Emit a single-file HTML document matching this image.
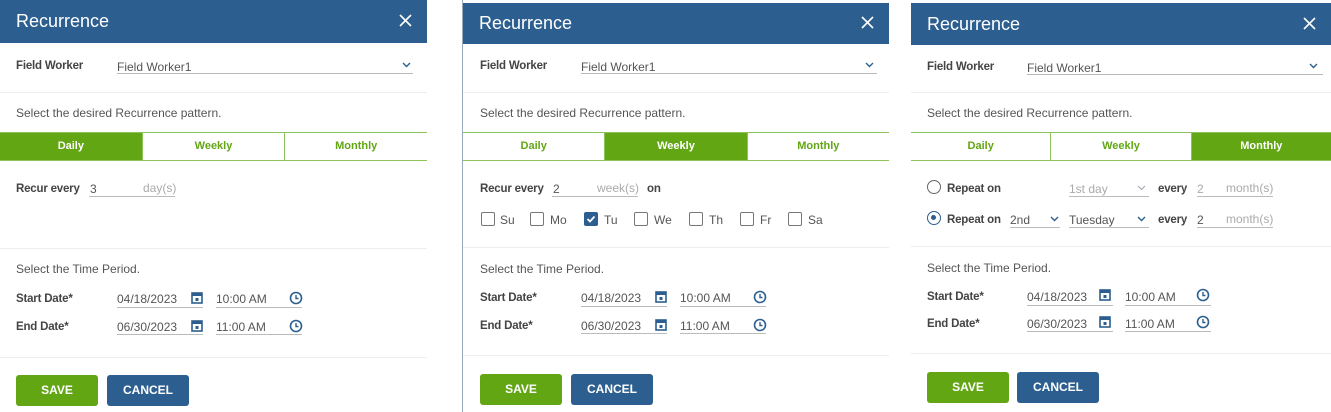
<!DOCTYPE html>
<html><head><meta charset="utf-8"><style>
*{margin:0;padding:0;box-sizing:border-box}
body{width:1331px;height:412px;background:#fff;position:relative;overflow:hidden;font-family:"Liberation Sans",sans-serif;color:#444}
.p{position:absolute;top:0;height:412px;background:#fff}
.a{position:absolute;white-space:nowrap}
.hd{position:absolute;left:0;right:0;background:#2c5f8f;color:#fff}
.hd .t{position:absolute;left:16px;top:11px;font-size:18px}
.hd svg{position:absolute;right:15px;top:14px}
.lb{font-size:11.5px;font-weight:bold;color:#444;letter-spacing:-0.2px;margin-top:2px}
.tx{font-size:12px;color:#555}
.ul{position:absolute;border-bottom:1px solid #bbb;height:1px}
.sep{position:absolute;left:0;right:0;height:1px;background:#eee}
.tabs{position:absolute;left:0;right:0;height:29px;display:flex;border-top:1px solid #8cc35a;border-bottom:1px solid #8cc35a}
.tabs div{flex:1;text-align:center;font-size:11px;font-weight:bold;color:#62a614;line-height:27px;border-left:1px solid #8cc35a}
.tabs div:first-child{border-left:none}
.tabs .on{background:#62a614;color:#fff}
.btn{position:absolute;height:31px;border-radius:3px;color:#fff;font-size:12px;font-weight:bold;text-align:center;line-height:31px}
.sv{background:#62a614;width:82px}
.cn{background:#2c5f8f;width:82px}
.cb{position:absolute;width:14px;height:14px;border:1px solid #777;border-radius:2px}
.ic{position:absolute}
</style></head><body>

<!-- Panel 1 -->
<div class="p" style="left:0;width:427px">
<div class="hd" style="top:0;height:43px"><span class="t">Recurrence</span><svg width="13" height="13" viewBox="0 0 13 13"><path d="M1 1L12 12M12 1L1 12" stroke="#fff" stroke-width="1.6"/></svg></div>
<span class="a lb" style="left:16px;top:58px">Field Worker</span>
<span class="a tx" style="left:117px;top:60px">Field Worker1</span>
<svg class="ic" style="left:402px;top:62px" width="9" height="6" viewBox="0 0 9 6"><path d="M1 1l3.5 3.5L8 1" fill="none" stroke="#2c5f8f" stroke-width="1.4"/></svg>
<div class="ul" style="left:117px;width:296px;top:73px"></div>
<div class="sep" style="top:92px"></div>
<span class="a tx" style="left:16px;top:106px">Select the desired Recurrence pattern.</span>
<div class="tabs" style="top:132px"><div class="on">Daily</div><div>Weekly</div><div>Monthly</div></div>
<span class="a lb" style="left:16px;top:181px">Recur every</span>
<span class="a tx" style="left:90px;top:182px">3</span>
<span class="a tx" style="left:143px;top:181px;color:#aaa">day(s)</span>
<div class="ul" style="left:89px;width:86px;top:196px"></div>
<div class="sep" style="top:248px"></div>
<span class="a tx" style="left:16px;top:262px">Select the Time Period.</span>
<span class="a lb" style="left:16px;top:291px">Start Date*</span>
<span class="a tx" style="left:117px;top:292px">04/18/2023</span>
<span class="a tx" style="left:216px;top:292px">10:00 AM</span>
<div class="ul" style="left:117px;width:86px;top:307px"></div>
<div class="ul" style="left:216px;width:86px;top:307px"></div>
<span class="a lb" style="left:16px;top:319px">End Date*</span>
<span class="a tx" style="left:117px;top:320px">06/30/2023</span>
<span class="a tx" style="left:216px;top:320px">11:00 AM</span>
<div class="ul" style="left:117px;width:86px;top:334px"></div>
<div class="ul" style="left:216px;width:86px;top:334px"></div>
<svg class="ic" style="left:191px;top:291px" width="12" height="13" viewBox="0 0 12 13"><rect x="1" y="2" width="10" height="10" fill="none" stroke="#2c5f8f" stroke-width="1.6"/><rect x="1" y="2" width="10" height="3" fill="#2c5f8f"/><rect x="4.5" y="7" width="3" height="3" fill="#2c5f8f"/></svg>
<svg class="ic" style="left:191px;top:319px" width="12" height="13" viewBox="0 0 12 13"><rect x="1" y="2" width="10" height="10" fill="none" stroke="#2c5f8f" stroke-width="1.6"/><rect x="1" y="2" width="10" height="3" fill="#2c5f8f"/><rect x="4.5" y="7" width="3" height="3" fill="#2c5f8f"/></svg>
<svg class="ic" style="left:289px;top:291px" width="14" height="14" viewBox="0 0 14 14"><circle cx="7" cy="7" r="5.5" fill="none" stroke="#2c5f8f" stroke-width="1.6"/><path d="M7 4v3.5h2.5" fill="none" stroke="#2c5f8f" stroke-width="1.4"/></svg>
<svg class="ic" style="left:289px;top:319px" width="14" height="14" viewBox="0 0 14 14"><circle cx="7" cy="7" r="5.5" fill="none" stroke="#2c5f8f" stroke-width="1.6"/><path d="M7 4v3.5h2.5" fill="none" stroke="#2c5f8f" stroke-width="1.4"/></svg>
<div class="sep" style="top:357px"></div>
<div class="btn sv" style="left:16px;top:375px">SAVE</div>
<div class="btn cn" style="left:107px;top:375px">CANCEL</div>
</div>

<!-- Panel 2 -->
<div class="p" style="left:462px;width:427px;border-left:1px solid #9aaabb">
<div class="hd" style="top:3px;height:41px"><span class="t" style="top:10px">Recurrence</span><svg width="13" height="13" viewBox="0 0 13 13" style="top:13px"><path d="M1 1L12 12M12 1L1 12" stroke="#fff" stroke-width="1.6"/></svg></div>
<span class="a lb" style="left:17px;top:58px">Field Worker</span>
<span class="a tx" style="left:118px;top:60px">Field Worker1</span>
<svg class="ic" style="left:402px;top:62px" width="9" height="6" viewBox="0 0 9 6"><path d="M1 1l3.5 3.5L8 1" fill="none" stroke="#2c5f8f" stroke-width="1.4"/></svg>
<div class="ul" style="left:118px;width:296px;top:73px"></div>
<div class="sep" style="top:92px"></div>
<span class="a tx" style="left:17px;top:106px">Select the desired Recurrence pattern.</span>
<div class="tabs" style="top:132px"><div>Daily</div><div class="on">Weekly</div><div>Monthly</div></div>
<span class="a lb" style="left:17px;top:181px">Recur every</span>
<span class="a tx" style="left:90px;top:182px">2</span>
<span class="a tx" style="left:134px;top:181px;color:#aaa">week(s)</span>
<span class="a lb" style="left:184px;top:181px">on</span>
<div class="ul" style="left:89px;width:86px;top:196px"></div>
<div class="cb" style="left:18px;top:212px"></div><span class="a tx" style="left:37px;top:213px">Su</span>
<div class="cb" style="left:67px;top:212px"></div><span class="a tx" style="left:87px;top:213px">Mo</span>
<div class="cb" style="left:121px;top:212px;background:#2c5f8f;border-color:#2c5f8f"><svg width="12" height="12" viewBox="0 0 12 12" style="position:absolute;left:0;top:0"><path d="M2.5 6l2.5 2.5 4.5-5" fill="none" stroke="#fff" stroke-width="1.8"/></svg></div><span class="a tx" style="left:141px;top:213px">Tu</span>
<div class="cb" style="left:171px;top:212px"></div><span class="a tx" style="left:191px;top:213px">We</span>
<div class="cb" style="left:226px;top:212px"></div><span class="a tx" style="left:246px;top:213px">Th</span>
<div class="cb" style="left:277px;top:212px"></div><span class="a tx" style="left:297px;top:213px">Fr</span>
<div class="cb" style="left:325px;top:212px"></div><span class="a tx" style="left:345px;top:213px">Sa</span>
<div class="sep" style="top:247px"></div>
<span class="a tx" style="left:17px;top:262px">Select the Time Period.</span>
<span class="a lb" style="left:17px;top:290px">Start Date*</span>
<span class="a tx" style="left:118px;top:291px">04/18/2023</span>
<span class="a tx" style="left:217px;top:291px">10:00 AM</span>
<div class="ul" style="left:118px;width:86px;top:306px"></div>
<div class="ul" style="left:217px;width:86px;top:306px"></div>
<span class="a lb" style="left:17px;top:318px">End Date*</span>
<span class="a tx" style="left:118px;top:319px">06/30/2023</span>
<span class="a tx" style="left:217px;top:319px">11:00 AM</span>
<div class="ul" style="left:118px;width:86px;top:333px"></div>
<div class="ul" style="left:217px;width:86px;top:333px"></div>
<svg class="ic" style="left:192px;top:290px" width="12" height="13" viewBox="0 0 12 13"><rect x="1" y="2" width="10" height="10" fill="none" stroke="#2c5f8f" stroke-width="1.6"/><rect x="1" y="2" width="10" height="3" fill="#2c5f8f"/><rect x="4.5" y="7" width="3" height="3" fill="#2c5f8f"/></svg>
<svg class="ic" style="left:192px;top:318px" width="12" height="13" viewBox="0 0 12 13"><rect x="1" y="2" width="10" height="10" fill="none" stroke="#2c5f8f" stroke-width="1.6"/><rect x="1" y="2" width="10" height="3" fill="#2c5f8f"/><rect x="4.5" y="7" width="3" height="3" fill="#2c5f8f"/></svg>
<svg class="ic" style="left:290px;top:290px" width="14" height="14" viewBox="0 0 14 14"><circle cx="7" cy="7" r="5.5" fill="none" stroke="#2c5f8f" stroke-width="1.6"/><path d="M7 4v3.5h2.5" fill="none" stroke="#2c5f8f" stroke-width="1.4"/></svg>
<svg class="ic" style="left:290px;top:318px" width="14" height="14" viewBox="0 0 14 14"><circle cx="7" cy="7" r="5.5" fill="none" stroke="#2c5f8f" stroke-width="1.6"/><path d="M7 4v3.5h2.5" fill="none" stroke="#2c5f8f" stroke-width="1.4"/></svg>
<div class="sep" style="top:355px"></div>
<div class="btn sv" style="left:17px;top:374px">SAVE</div>
<div class="btn cn" style="left:108px;top:374px">CANCEL</div>
</div>

<!-- Panel 3 -->
<div class="p" style="left:911px;width:420px">
<div class="hd" style="top:3px;height:42px"><span class="t" style="top:11px">Recurrence</span><svg width="13" height="13" viewBox="0 0 13 13" style="top:14px"><path d="M1 1L12 12M12 1L1 12" stroke="#fff" stroke-width="1.6"/></svg></div>
<span class="a lb" style="left:16px;top:59px">Field Worker</span>
<span class="a tx" style="left:116px;top:61px">Field Worker1</span>
<svg class="ic" style="left:398px;top:63px" width="9" height="6" viewBox="0 0 9 6"><path d="M1 1l3.5 3.5L8 1" fill="none" stroke="#2c5f8f" stroke-width="1.4"/></svg>
<div class="ul" style="left:116px;width:296px;top:74px"></div>
<div class="sep" style="top:92px"></div>
<span class="a tx" style="left:16px;top:106px">Select the desired Recurrence pattern.</span>
<div class="tabs" style="top:132px"><div>Daily</div><div>Weekly</div><div class="on">Monthly</div></div>
<div class="a" style="left:16px;top:180px;width:14px;height:14px;border:1.5px solid #666;border-radius:50%"></div>
<span class="a lb" style="left:36px;top:181px">Repeat on</span>
<span class="a tx" style="left:158px;top:182px;color:#aaa">1st day</span>
<svg class="ic" style="left:226px;top:185px" width="9" height="6" viewBox="0 0 9 6"><path d="M1 1l3.5 3.5L8 1" fill="none" stroke="#aab" stroke-width="1.2"/></svg>
<div class="ul" style="left:158px;width:80px;top:196px"></div>
<span class="a lb" style="left:247px;top:181px">every</span>
<span class="a tx" style="left:286px;top:182px;color:#aaa">2</span>
<span class="a tx" style="left:315px;top:181px;color:#aaa">month(s)</span>
<div class="ul" style="left:286px;width:76px;top:196px"></div>
<div class="a" style="left:16px;top:211px;width:14px;height:14px;border:1.5px solid #2c5f8f;border-radius:50%"><div style="position:absolute;left:3px;top:3px;width:5px;height:5px;background:#2c5f8f;border-radius:50%"></div></div>
<span class="a lb" style="left:36px;top:212px">Repeat on</span>
<span class="a tx" style="left:99px;top:213px">2nd</span>
<svg class="ic" style="left:139px;top:216px" width="9" height="6" viewBox="0 0 9 6"><path d="M1 1l3.5 3.5L8 1" fill="none" stroke="#2c5f8f" stroke-width="1.4"/></svg>
<div class="ul" style="left:99px;width:50px;top:227px"></div>
<span class="a tx" style="left:158px;top:213px">Tuesday</span>
<svg class="ic" style="left:226px;top:216px" width="9" height="6" viewBox="0 0 9 6"><path d="M1 1l3.5 3.5L8 1" fill="none" stroke="#2c5f8f" stroke-width="1.4"/></svg>
<div class="ul" style="left:158px;width:80px;top:227px"></div>
<span class="a lb" style="left:247px;top:212px">every</span>
<span class="a tx" style="left:286px;top:213px">2</span>
<span class="a tx" style="left:315px;top:212px;color:#aaa">month(s)</span>
<div class="ul" style="left:286px;width:76px;top:227px"></div>
<div class="sep" style="top:246px"></div>
<span class="a tx" style="left:16px;top:261px">Select the Time Period.</span>
<span class="a lb" style="left:16px;top:289px">Start Date*</span>
<span class="a tx" style="left:116px;top:290px">04/18/2023</span>
<span class="a tx" style="left:214px;top:290px">10:00 AM</span>
<div class="ul" style="left:116px;width:86px;top:305px"></div>
<div class="ul" style="left:214px;width:86px;top:305px"></div>
<span class="a lb" style="left:16px;top:316px">End Date*</span>
<span class="a tx" style="left:116px;top:317px">06/30/2023</span>
<span class="a tx" style="left:214px;top:317px">11:00 AM</span>
<div class="ul" style="left:116px;width:86px;top:331px"></div>
<div class="ul" style="left:214px;width:86px;top:331px"></div>
<svg class="ic" style="left:188px;top:288px" width="12" height="13" viewBox="0 0 12 13"><rect x="1" y="2" width="10" height="10" fill="none" stroke="#2c5f8f" stroke-width="1.6"/><rect x="1" y="2" width="10" height="3" fill="#2c5f8f"/><rect x="4.5" y="7" width="3" height="3" fill="#2c5f8f"/></svg>
<svg class="ic" style="left:188px;top:315px" width="12" height="13" viewBox="0 0 12 13"><rect x="1" y="2" width="10" height="10" fill="none" stroke="#2c5f8f" stroke-width="1.6"/><rect x="1" y="2" width="10" height="3" fill="#2c5f8f"/><rect x="4.5" y="7" width="3" height="3" fill="#2c5f8f"/></svg>
<svg class="ic" style="left:285px;top:288px" width="14" height="14" viewBox="0 0 14 14"><circle cx="7" cy="7" r="5.5" fill="none" stroke="#2c5f8f" stroke-width="1.6"/><path d="M7 4v3.5h2.5" fill="none" stroke="#2c5f8f" stroke-width="1.4"/></svg>
<svg class="ic" style="left:285px;top:315px" width="14" height="14" viewBox="0 0 14 14"><circle cx="7" cy="7" r="5.5" fill="none" stroke="#2c5f8f" stroke-width="1.6"/><path d="M7 4v3.5h2.5" fill="none" stroke="#2c5f8f" stroke-width="1.4"/></svg>
<div class="sep" style="top:353px"></div>
<div class="btn sv" style="left:16px;top:372px">SAVE</div>
<div class="btn cn" style="left:106px;top:372px">CANCEL</div>
</div>
</body></html>
